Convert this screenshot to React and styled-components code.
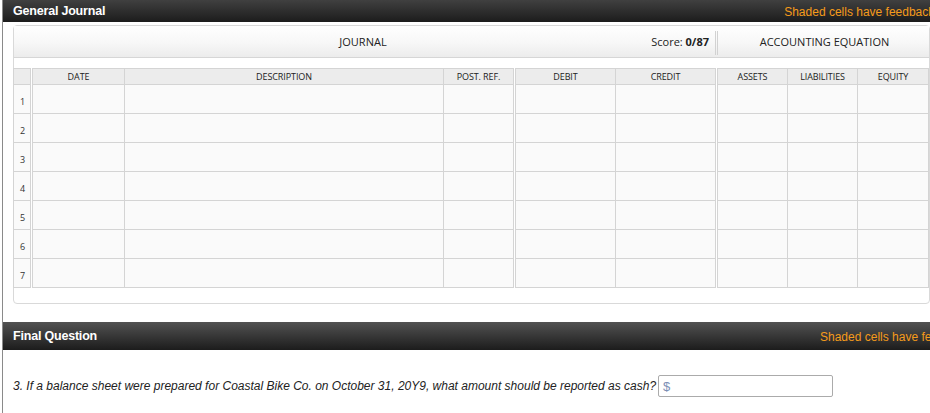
import React from "react";
import styled, { createGlobalStyle } from "styled-components";

const GlobalStyle = createGlobalStyle`
  html, body {
    margin: 0;
    padding: 0;
    background: #ffffff;
    overflow: hidden;
  }
`;

const Page = styled.div`
  margin-left: 2px;
  border-left: 1px solid #8a8a8a;
  min-height: 413px;
  width: 927px;
  overflow: hidden;
`;

const SectionBar = styled.div`
  display: flex;
  align-items: center;
  height: ${(p) => p.$height}px;
  padding-left: 10px;
  background: linear-gradient(to bottom, ${(p) => p.$top} 0%, #1c1c1c 100%);
  font-family: "Liberation Sans", Arial, sans-serif;
  white-space: nowrap;
`;

const BarTitle = styled.div`
  color: #ffffff;
  font-size: 12.5px;
  font-weight: bold;
  letter-spacing: -0.2px;
`;

const BarNote = styled.div`
  margin-left: ${(p) => p.$offset}px;
  color: #f59b1b;
  font-size: 12px;
  margin-top: 2px;
`;

const Panel = styled.div`
  margin: 3px 0 0 10px;
  width: 915px;
  border: 1px solid #d9d9d9;
  border-radius: 4px;
  padding-bottom: 15px;
  background: #ffffff;
`;

const Toolbar = styled.div`
  display: flex;
  height: 31px;
  border-bottom: 1px solid #d6d6d6;
  background: linear-gradient(to bottom, #ffffff 0%, #f7f7f7 55%, #ececec 100%);
  font-family: "Open Sans", "DejaVu Sans", sans-serif;
  font-size: 11px;
  color: #222;
`;

const JournalTab = styled.div`
  flex: 0 0 701px;
  display: grid;
  grid-template-columns: 1fr auto 1fr;
  align-items: center;
  padding-right: 6px;
  box-sizing: border-box;
`;

const TabLabel = styled.div`
  grid-column: 2;
  padding-left: 3px;
`;

const Score = styled.div`
  justify-self: end;
  b {
    font-weight: bold;
  }
`;

const Divider = styled.div`
  width: 1px;
  margin: 5px 0 2px;
  border-left: 1px solid #d2d2d2;
  border-right: 1px solid #d2d2d2;
`;

const EquationTab = styled.div`
  flex: 1;
  display: flex;
  align-items: center;
  justify-content: center;
  padding-left: 2px;
`;

const Grid = styled.div`
  display: flex;
  gap: 1px;
  margin: 10px 0 0 -1px;
  font-family: "Open Sans", "DejaVu Sans", sans-serif;
`;

const Group = styled.div`
  display: grid;
  grid-template-columns: ${(p) => p.$cols};
  border-left: 1px solid #d4d4d4;
  border-top: 1px solid #d4d4d4;
`;

const HeadCell = styled.div`
  height: 15px;
  display: flex;
  align-items: center;
  justify-content: center;
  background: #ececec;
  border-right: 1px solid #d4d4d4;
  border-bottom: 1px solid #d4d4d4;
  font-size: 9px;
  color: #222;
  letter-spacing: -0.1px;
`;

const Cell = styled.div`
  display: flex;
  align-items: center;
  padding-left: ${(p) => (p.$num ? "6px" : "0")};
  padding-top: 4px;
  box-sizing: border-box;
  height: 29px;
  background: #fafafa;
  border-right: 1px solid #d4d4d4;
  border-bottom: 1px solid #d4d4d4;
  font-size: 9px;
  color: #333;
`;

const Question = styled.div`
  display: flex;
  align-items: center;
  gap: 2px;
  margin: 25px 0 0 10px;
  font-family: "Liberation Sans", Arial, sans-serif;
  font-size: 12px;
  font-style: italic;
  color: #222;
  white-space: nowrap;
`;

const AnswerBox = styled.div`
  width: 169px;
  height: 20px;
  border: 1px solid #ababab;
  border-radius: 2px;
  display: flex;
  align-items: center;
  padding-left: 4px;
  box-sizing: content-box;
  font-style: normal;
  font-size: 13px;
  color: #7b8fb5;
`;

const groups = [
  { cols: "17px", heads: [""], num: true },
  { cols: "92px 319px 70px", heads: ["DATE", "DESCRIPTION", "POST. REF."] },
  { cols: "100px 100px", heads: ["DEBIT", "CREDIT"] },
  { cols: "70px 70px 71px", heads: ["ASSETS", "LIABILITIES", "EQUITY"] },
];

const rows = [1, 2, 3, 4, 5, 6, 7];

const App = () => {
  return (
    <>
      <GlobalStyle />
      <Page>
        <SectionBar $height={22} $top="#404040">
          <BarTitle>General Journal</BarTitle>
          <BarNote $offset={679}>Shaded cells have feedback.</BarNote>
        </SectionBar>

        <Panel>
          <Toolbar>
            <JournalTab>
              <TabLabel>JOURNAL</TabLabel>
              <Score>
                Score: <b>0/87</b>
              </Score>
            </JournalTab>
            <Divider />
            <EquationTab>ACCOUNTING EQUATION</EquationTab>
          </Toolbar>

          <Grid>
            {groups.map((g, gi) => (
              <Group key={gi} $cols={g.cols}>
                {g.heads.map((h, hi) => (
                  <HeadCell key={"h" + hi}>{h}</HeadCell>
                ))}
                {rows.map((r) =>
                  g.heads.map((h, hi) => (
                    <Cell key={r + "-" + hi} $num={g.num}>
                      {g.num ? r : ""}
                    </Cell>
                  ))
                )}
              </Group>
            ))}
          </Grid>
        </Panel>

        <SectionBar $height={28} $top="#525252" style={{ marginTop: 18 }}>
          <BarTitle>Final Question</BarTitle>
          <BarNote $offset={723}>Shaded cells have feedback.</BarNote>
        </SectionBar>

        <Question>
          3. If a balance sheet were prepared for Coastal Bike Co. on October
          31, 20Y9, what amount should be reported as cash?
          <AnswerBox>$</AnswerBox>
        </Question>
      </Page>
    </>
  );
};

export default App;
